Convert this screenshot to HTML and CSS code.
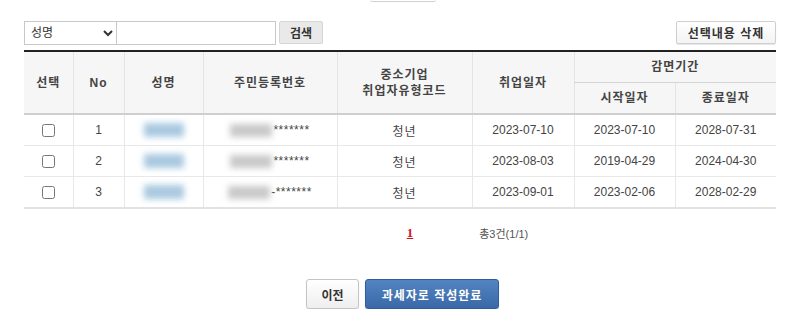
FILE: index.html
```html
<!DOCTYPE html>
<html lang="ko">
<head>
  <meta charset="UTF-8" />
  <meta name="viewport" content="width=device-width, initial-scale=1.0"/>
  <title>감면대상자 목록</title>
  <link rel="stylesheet" href="styles.css">
</head>
<body>
  <div class="top-edge"><span></span></div>

  <div class="wrap">
    <div class="toolbar">
      <div class="search">
        <select class="search-type">
          <option>성명</option>
          <option>주민등록번호</option>
        </select>
        <input type="text" class="search-text" />
        <button class="btn-gray">검색</button>
      </div>
      <button class="btn-white">선택내용 삭제</button>
    </div>

    <table class="list">
      <colgroup>
        <col class="c-chk">
        <col class="c-no">
        <col class="c-name">
        <col class="c-jumin">
        <col class="c-type">
        <col class="c-join">
        <col class="c-date">
        <col class="c-date">
      </colgroup>
      <thead>
        <tr>
          <th rowspan="2">선택</th>
          <th rowspan="2">No</th>
          <th rowspan="2">성명</th>
          <th rowspan="2">주민등록번호</th>
          <th rowspan="2">중소기업<br>취업자유형코드</th>
          <th rowspan="2">취업일자</th>
          <th colspan="2" class="group">감면기간</th>
        </tr>
        <tr>
          <th>시작일자</th>
          <th>종료일자</th>
        </tr>
      </thead>
      <tbody>
        <tr>
          <td><input type="checkbox" /></td>
          <td>1</td>
          <td><span class="blur-name"></span></td>
          <td class="jumin"><span class="blur-jumin"></span>*******</td>
          <td class="kor">청년</td>
          <td>2023-07-10</td>
          <td>2023-07-10</td>
          <td>2028-07-31</td>
        </tr>
        <tr>
          <td><input type="checkbox" /></td>
          <td>2</td>
          <td><span class="blur-name"></span></td>
          <td class="jumin"><span class="blur-jumin"></span>*******</td>
          <td class="kor">청년</td>
          <td>2023-08-03</td>
          <td>2019-04-29</td>
          <td>2024-04-30</td>
        </tr>
        <tr>
          <td><input type="checkbox" /></td>
          <td>3</td>
          <td><span class="blur-name"></span></td>
          <td class="jumin"><span class="blur-jumin"></span>-*******</td>
          <td class="kor">청년</td>
          <td>2023-09-01</td>
          <td>2023-02-06</td>
          <td>2028-02-29</td>
        </tr>
      </tbody>
    </table>

    <div class="paging">
      <span></span>
      <a href="#" class="page-on">1</a>
      <span class="total">총3건(1/1)</span>
    </div>

    <div class="actions">
      <button class="btn-prev">이전</button>
      <button class="btn-blue">과세자로 작성완료</button>
    </div>
  </div>
</body>
</html>
```

FILE: styles.css
```css
body {
  margin: 0;
  font-family: "Liberation Sans", "Noto Sans CJK KR", sans-serif;
  font-size: 12px;
  color: #333;
  background: #fff;
}

.top-edge {
  display: flex;
  justify-content: center;
  height: 21px;
}

.top-edge span {
  display: block;
  width: 66px;
  height: 1px;
  margin-left: 6px;
  border-bottom: 1px solid #d0d0d0;
  border-radius: 0 0 3px 3px;
}

.wrap {
  margin: 0 24px;
}

.toolbar {
  display: flex;
  justify-content: space-between;
  align-items: flex-start;
  height: 29px;
}

.search {
  display: flex;
  align-items: flex-start;
}

.search-type {
  width: 93px;
  height: 24px;
  border: 1px solid #c8c8c8;
  font-family: inherit;
  font-size: 12px;
  color: #333;
  padding: 0 2px;
  background: #fff;
}

.search-text {
  width: 159px;
  height: 24px;
  box-sizing: border-box;
  border: 1px solid #c8c8c8;
  border-left: none;
  margin: 0;
}

.btn-gray {
  margin-left: 3px;
  width: 44px;
  height: 23px;
  border: 1px solid #d6d6d6;
  border-radius: 2px;
  background: #e9e9e9;
  font-family: inherit;
  font-size: 12px;
  font-weight: bold;
  color: #333;
  padding: 0;
}

.btn-white {
  width: 100px;
  height: 23px;
  border: 1px solid #cfcfcf;
  border-radius: 2px;
  background: linear-gradient(#fff, #f3f3f3);
  font-family: inherit;
  font-size: 12px;
  font-weight: bold;
  color: #333;
  letter-spacing: 1px;
  padding: 0;
  box-shadow: 0 1px 1px rgba(0, 0, 0, 0.1);
}

.list {
  width: 100%;
  border-collapse: collapse;
  border-top: 2px solid #222;
  border-bottom: 2px solid #e2e2e2;
  table-layout: fixed;
}

.c-chk { width: 49px; }
.c-no { width: 51px; }
.c-name { width: 79px; }
.c-jumin { width: 134px; }
.c-type { width: 135px; }
.c-join { width: 102px; }
.c-date { width: 101px; }

.list th {
  background: #f6f6f6;
  font-weight: bold;
  color: #444;
  height: 30px;
  padding: 0;
  border-left: 1px solid #e4e4e4;
  letter-spacing: 1px;
  line-height: 16px;
}

.list thead tr:first-child th:first-child {
  border-left: none;
}

.list th.group {
  border-bottom: 1px solid #d4d4d4;
}

.list thead tr:last-child th,
.list thead tr:first-child th[rowspan] {
  border-bottom: 2px solid #cfcfcf;
}

.list td {
  height: 30px;
  padding: 0;
  text-align: center;
  border-left: 1px solid #e8e8e8;
  border-bottom: 1px solid #e8e8e8;
  color: #444;
  font-size: 12px;
}

.list td:first-child {
  border-left: none;
}

.list td input {
  margin: 0;
  width: 13px;
  height: 13px;
  vertical-align: middle;
}

.list td.kor {
  letter-spacing: 1px;
}

.blur-name {
  display: inline-block;
  width: 40px;
  height: 14px;
  background: #a9c9e0;
  filter: blur(3px);
  vertical-align: middle;
}

.jumin {
  letter-spacing: 0.5px;
}

.blur-jumin {
  display: inline-block;
  width: 42px;
  height: 13px;
  margin-right: 1px;
  background: #c9c9c9;
  filter: blur(3px);
  vertical-align: middle;
}

.paging {
  display: grid;
  grid-template-columns: 1fr auto 1fr;
  align-items: center;
  margin-top: 16px;
  height: 16px;
}

.page-on {
  padding-left: 20px;
  font-family: "Liberation Serif", serif;
  font-weight: bold;
  font-size: 13px;
  color: #d4141c;
}

.total {
  padding-left: 66px;
  font-size: 11px;
  color: #555;
}

.actions {
  display: flex;
  justify-content: center;
  gap: 6px;
  margin-top: 38px;
  padding-left: 5px;
}

.btn-prev {
  width: 53px;
  height: 30px;
  border: 1px solid #c4c4c4;
  border-radius: 3px;
  background: linear-gradient(#fff, #eee);
  font-family: inherit;
  font-size: 12px;
  font-weight: bold;
  color: #333;
  padding: 0;
  box-shadow: 0 1px 1px rgba(0, 0, 0, 0.15);
}

.btn-blue {
  width: 134px;
  height: 30px;
  border: 1px solid #2f5f9a;
  border-radius: 3px;
  background: linear-gradient(#5383c0, #3a69a8);
  font-family: inherit;
  font-size: 12px;
  font-weight: bold;
  color: #fff;
  letter-spacing: 1px;
  padding: 0;
  box-shadow: 0 1px 1px rgba(0, 0, 0, 0.2);
}
```
